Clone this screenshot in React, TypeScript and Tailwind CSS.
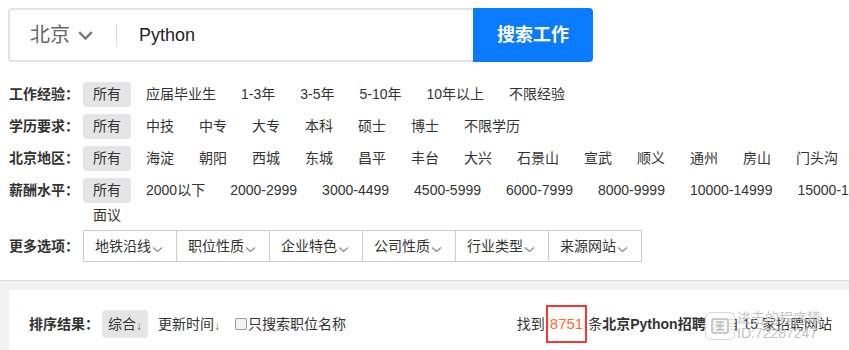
import { Fragment } from 'react'

// Job search filter page: search bar, filter rows, sort bar

const font = { fontFamily: '"Liberation Sans", "Noto Sans CJK SC", sans-serif' }

const filterRows = [
  { label: '工作经验', items: ['应届毕业生', '1-3年', '3-5年', '5-10年', '10年以上', '不限经验'] },
  { label: '学历要求', items: ['中技', '中专', '大专', '本科', '硕士', '博士', '不限学历'] },
  {
    label: '北京地区',
    items: ['海淀', '朝阳', '西城', '东城', '昌平', '丰台', '大兴', '石景山', '宣武', '顺义', '通州', '房山', '门头沟'],
  },
  {
    label: '薪酬水平',
    items: [
      '2000以下',
      '2000-2999',
      '3000-4499',
      '4500-5999',
      '6000-7999',
      '8000-9999',
      '10000-14999',
      '15000-19999',
      '面议',
    ],
  },
]

const moreOptions = ['地铁沿线', '职位性质', '企业特色', '公司性质', '行业类型', '来源网站']

function SmallChevron() {
  return (
    <svg width="11" height="7" viewBox="0 0 11 7" className="mt-[7px] ml-[1px]">
      <path d="M1 1.5l4.5 4 4.5-4" fill="none" stroke="#8a8a8a" strokeWidth="1.2" />
    </svg>
  )
}

export default function App() {
  return (
    <div className="w-[849px] h-[350px] overflow-hidden bg-white text-[#333] text-[14px]" style={font}>
      {/* Search bar */}
      <div className="flex ml-[8px] mt-[8px]">
        <div className="w-[465px] h-[54px] border-2 border-r-0 border-[#e3e3e3] rounded-l-[4px] flex items-center pl-[20px]">
          <span className="text-[20px] text-[#666] leading-none">北京</span>
          <svg width="15" height="9" viewBox="0 0 15 9" className="ml-[8px]">
            <path d="M1.2 1.2l6.3 6.3 6.3-6.3" fill="none" stroke="#777" strokeWidth="2.4" />
          </svg>
          <div className="ml-[23px] w-px h-[22px] bg-[#dcdcdc]" />
          <span className="ml-[22px] text-[18px] text-[#222]">Python</span>
        </div>
        <button className="w-[120px] h-[54px] bg-[#0a7bff] rounded-r-[4px] text-white font-bold text-[18px]">
          搜索工作
        </button>
      </div>

      {/* Filter rows */}
      <div className="mt-[20px] pl-[9px]">
        {filterRows.map((row, i) => (
          <div key={row.label} className={`flex w-[900px] ${i === filterRows.length - 1 ? 'mb-[2px]' : 'mb-[7px]'}`}>
            <div className="w-[74px] shrink-0 font-bold leading-[25px]">{row.label}：</div>
            <div className="flex flex-wrap gap-x-[5px] w-[820px]">
              <span className="px-[10px] h-[25px] leading-[25px] bg-[#e5e5e5] rounded-[4px]">所有</span>
              {row.items.map((item) => (
                <span key={item} className="px-[10px] h-[25px] leading-[25px] whitespace-nowrap">
                  {item}
                </span>
              ))}
            </div>
          </div>
        ))}

        <div className="flex items-center">
          <div className="w-[74px] shrink-0 font-bold">更多选项：</div>
          <div className="flex">
            {moreOptions.map((opt, i) => (
              <Fragment key={opt}>
                <div
                  className={`h-[32px] border border-[#cccccc] flex items-center pl-[11px] pr-[13px] ${
                    i > 0 ? 'border-l-0' : ''
                  }`}
                >
                  <span>{opt}</span>
                  <SmallChevron />
                </div>
              </Fragment>
            ))}
          </div>
        </div>
      </div>

      {/* Sort / result bar */}
      <div className="mt-[18px] border-t border-[#dadada] bg-[#f2f2f2] pt-[9px] pl-[9px] h-[80px]">
        <div className="bg-white h-full pt-[20px] pl-[20px] pr-[17px] flex items-start relative">
          <div className="flex items-center h-[28px]">
            <span className="font-bold">排序结果：</span>
            <span className="ml-[3px] h-[28px] px-[6px] flex items-center bg-[#e5e5e5] rounded-[4px]">
              综合<span className="text-[12px] text-[#666] mt-[4px]">↓</span>
            </span>
            <span className="ml-[10px] flex items-center">
              更新时间<span className="text-[12px] text-[#666] mt-[4px]">↓</span>
            </span>
            <span className="ml-[15px] w-[12px] h-[12px] border border-[#999] rounded-[2px] bg-[#f3f3f3]" />
            <span className="ml-[1px]">只搜索职位名称</span>
          </div>

          <div className="ml-auto flex items-center h-[28px]">
            <span>找到</span>
            <span className="ml-[1px] h-[38px] px-[2px] border-2 border-[#ff3535] flex items-center text-[#ff6a2a] text-[15px]">
              8751
            </span>
            <span className="ml-[1px]">条</span>
            <span className="font-bold">北京Python招聘</span>
            <span className="ml-[5px]">来自 15 家招聘网站</span>
          </div>

          {/* Watermark overlay */}
          <div className="absolute left-[696px] top-[21px] flex items-center pointer-events-none">
            <div className="w-[30px] h-[28px] rounded-[5px] bg-white/85 border border-[#d8d8d8] flex items-center justify-center">
              <svg width="18" height="16" viewBox="0 0 18 16">
                <rect x="1" y="1" width="16" height="14" rx="2" fill="none" stroke="#bdbdbd" strokeWidth="1.6" />
                <path d="M5 4h8M5 8h8M5 12h8M9 4v8" stroke="#bdbdbd" strokeWidth="1.4" />
              </svg>
            </div>
            <div className="ml-[2px] flex flex-col leading-[15px] text-[14px] text-[#c4c4c4]">
              <span>进击的程序猿</span>
              <span>ID:72287247</span>
            </div>
          </div>
        </div>
      </div>
    </div>
  )
}
